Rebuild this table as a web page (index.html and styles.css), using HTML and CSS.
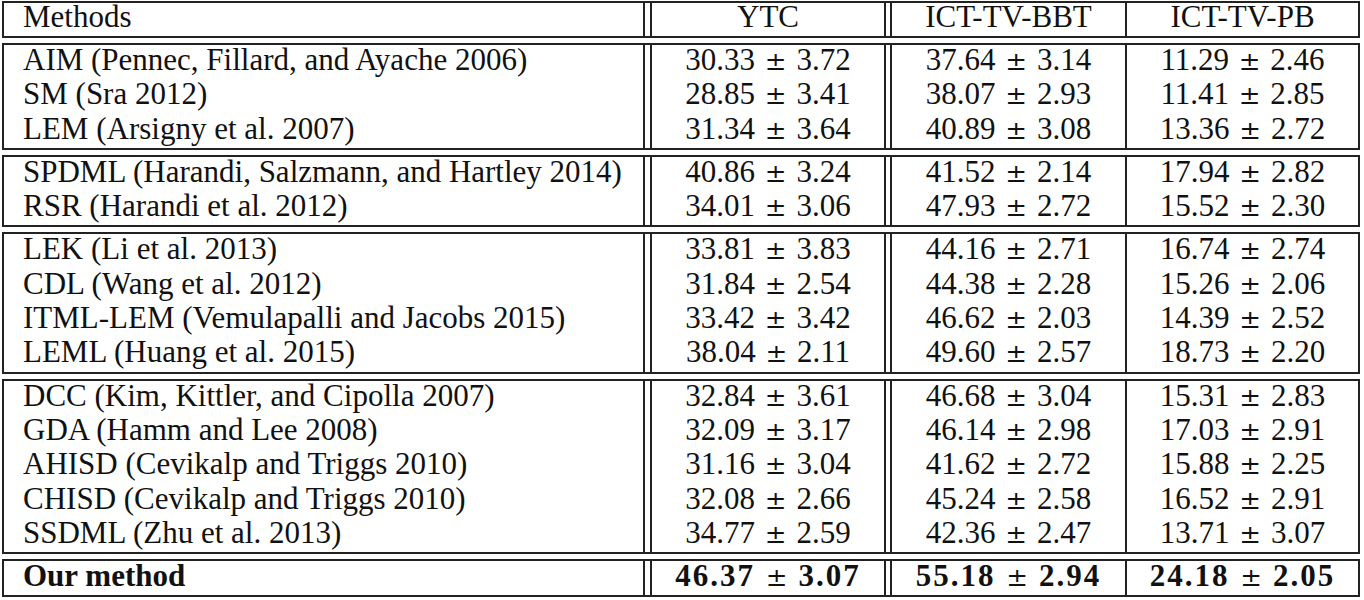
FILE: index.html
```html
<!DOCTYPE html>
<html>
<head>
    <meta charset="utf-8">
    <link rel="stylesheet" href="styles.css">
</head>
<body>
    <div class="results">
        <div class="block head">
            <div class="c1">Methods</div>
            <div class="c2">YTC</div>
            <div class="c3">ICT-TV-BBT</div>
            <div class="c4">ICT-TV-PB</div>
        </div>

        <div class="block">
            <div class="c1">AIM (Pennec, Fillard, and Ayache 2006)</div>
            <div class="c2 num">30.33 <span class="pm">±</span> 3.72</div>
            <div class="c3 num">37.64 <span class="pm">±</span> 3.14</div>
            <div class="c4 num">11.29 <span class="pm">±</span> 2.46</div>
            <div class="c1">SM (Sra 2012)</div>
            <div class="c2 num">28.85 <span class="pm">±</span> 3.41</div>
            <div class="c3 num">38.07 <span class="pm">±</span> 2.93</div>
            <div class="c4 num">11.41 <span class="pm">±</span> 2.85</div>
            <div class="c1">LEM (Arsigny et al. 2007)</div>
            <div class="c2 num">31.34 <span class="pm">±</span> 3.64</div>
            <div class="c3 num">40.89 <span class="pm">±</span> 3.08</div>
            <div class="c4 num">13.36 <span class="pm">±</span> 2.72</div>
        </div>

        <div class="block">
            <div class="c1">SPDML (Harandi, Salzmann, and Hartley 2014)</div>
            <div class="c2 num">40.86 <span class="pm">±</span> 3.24</div>
            <div class="c3 num">41.52 <span class="pm">±</span> 2.14</div>
            <div class="c4 num">17.94 <span class="pm">±</span> 2.82</div>
            <div class="c1">RSR (Harandi et al. 2012)</div>
            <div class="c2 num">34.01 <span class="pm">±</span> 3.06</div>
            <div class="c3 num">47.93 <span class="pm">±</span> 2.72</div>
            <div class="c4 num">15.52 <span class="pm">±</span> 2.30</div>
        </div>

        <div class="block">
            <div class="c1">LEK (Li et al. 2013)</div>
            <div class="c2 num">33.81 <span class="pm">±</span> 3.83</div>
            <div class="c3 num">44.16 <span class="pm">±</span> 2.71</div>
            <div class="c4 num">16.74 <span class="pm">±</span> 2.74</div>
            <div class="c1">CDL (Wang et al. 2012)</div>
            <div class="c2 num">31.84 <span class="pm">±</span> 2.54</div>
            <div class="c3 num">44.38 <span class="pm">±</span> 2.28</div>
            <div class="c4 num">15.26 <span class="pm">±</span> 2.06</div>
            <div class="c1">ITML-LEM (Vemulapalli and Jacobs 2015)</div>
            <div class="c2 num">33.42 <span class="pm">±</span> 3.42</div>
            <div class="c3 num">46.62 <span class="pm">±</span> 2.03</div>
            <div class="c4 num">14.39 <span class="pm">±</span> 2.52</div>
            <div class="c1">LEML (Huang et al. 2015)</div>
            <div class="c2 num">38.04 <span class="pm">±</span> 2.11</div>
            <div class="c3 num">49.60 <span class="pm">±</span> 2.57</div>
            <div class="c4 num">18.73 <span class="pm">±</span> 2.20</div>
        </div>

        <div class="block">
            <div class="c1">DCC (Kim, Kittler, and Cipolla 2007)</div>
            <div class="c2 num">32.84 <span class="pm">±</span> 3.61</div>
            <div class="c3 num">46.68 <span class="pm">±</span> 3.04</div>
            <div class="c4 num">15.31 <span class="pm">±</span> 2.83</div>
            <div class="c1">GDA (Hamm and Lee 2008)</div>
            <div class="c2 num">32.09 <span class="pm">±</span> 3.17</div>
            <div class="c3 num">46.14 <span class="pm">±</span> 2.98</div>
            <div class="c4 num">17.03 <span class="pm">±</span> 2.91</div>
            <div class="c1">AHISD (Cevikalp and Triggs 2010)</div>
            <div class="c2 num">31.16 <span class="pm">±</span> 3.04</div>
            <div class="c3 num">41.62 <span class="pm">±</span> 2.72</div>
            <div class="c4 num">15.88 <span class="pm">±</span> 2.25</div>
            <div class="c1">CHISD (Cevikalp and Triggs 2010)</div>
            <div class="c2 num">32.08 <span class="pm">±</span> 2.66</div>
            <div class="c3 num">45.24 <span class="pm">±</span> 2.58</div>
            <div class="c4 num">16.52 <span class="pm">±</span> 2.91</div>
            <div class="c1">SSDML (Zhu et al. 2013)</div>
            <div class="c2 num">34.77 <span class="pm">±</span> 2.59</div>
            <div class="c3 num">42.36 <span class="pm">±</span> 2.47</div>
            <div class="c4 num">13.71 <span class="pm">±</span> 3.07</div>
        </div>

        <div class="block best">
            <div class="c1">Our method</div>
            <div class="c2 num">46.37 <span class="pm">±</span> 3.07</div>
            <div class="c3 num">55.18 <span class="pm">±</span> 2.94</div>
            <div class="c4 num">24.18 <span class="pm">±</span> 2.05</div>
        </div>
    </div>
</body>
</html>
```

FILE: styles.css
```css
body {
    margin: 0;
    background: #ffffff;
    color: #111111;
    font-family: "Liberation Serif", "Times New Roman", serif;
    font-size: 31px;
}
.results {
    padding: 1px 0 0 2px;
    width: 1358px;
}
.block {
    display: grid;
    grid-template-columns: 641px 241px 241px 1fr;
    grid-auto-rows: 34.3px;
    border: 2px solid #222222;
    margin-bottom: 5px;
}
.block.head { grid-auto-rows: 33px; }
.block > div {
    line-height: 29px;
    white-space: nowrap;
}
.block.head > div { line-height: 28px; }
.c1 {
    padding-left: 19px;
    border-right: 2px solid #222222;
}
.c2 {
    margin-left: 5px;
    border-left: 2px solid #222222;
    border-right: 2px solid #222222;
    text-align: center;
}
.c3 {
    margin-left: 4px;
    border-left: 2px solid #222222;
    border-right: 2px solid #222222;
    text-align: center;
}
.c4 { text-align: center; }
.num {
    font-size: 31px;
    word-spacing: 2px;
}
.pm {
    font-family: "DejaVu Serif", serif;
    font-size: 26px;
    font-weight: normal;
}
.best > div { font-weight: bold; }
.best .num {
    letter-spacing: 2px;
    word-spacing: 1px;
}
.best .pm { letter-spacing: 0; }
```
